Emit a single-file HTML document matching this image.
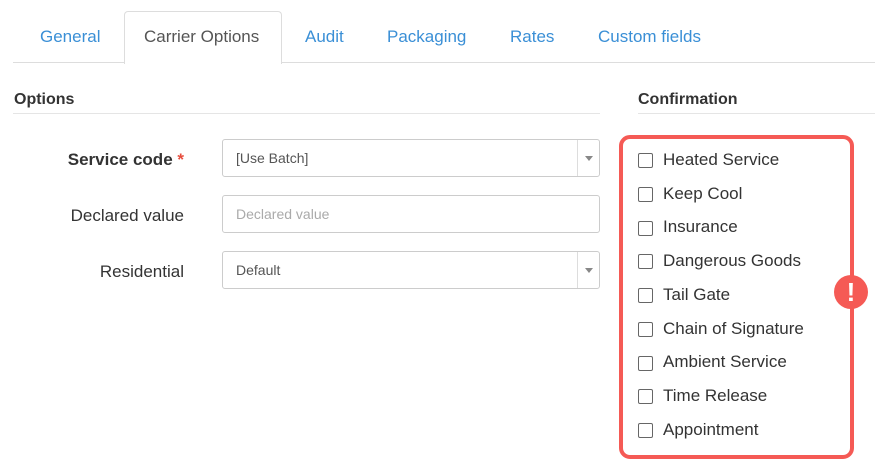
<!DOCTYPE html>
<html><head><style>
body{margin:0;width:875px;height:475px;background:#fff;font-family:"Liberation Sans",sans-serif;position:relative;overflow:hidden;color:#333}
.a{position:absolute}
.tab{position:absolute;top:27px;font-size:17px;color:#3a8fd6}
.inp{position:absolute;left:222px;width:376px;height:36px;border:1px solid #ccc;border-radius:3px;font-size:14px;color:#555}
.inp span{position:absolute;left:13px;top:10px}
.arr{position:absolute;right:21px;top:0;bottom:0;border-left:1px solid #ddd}
.arr:after{content:"";position:absolute;left:7px;top:16px;border:4px solid transparent;border-top:5px solid #888;}
.lbl{position:absolute;font-size:17px;right:691px;text-align:right;white-space:nowrap}
.cb{position:absolute;left:638px;width:13px;height:13px;border:1px solid #666;border-radius:2px}
.ct{position:absolute;left:663px;font-size:17px;color:#333}
</style></head><body>
<div class="a" style="left:13px;top:62px;width:862px;height:1px;background:#ddd"></div>
<div class="a" style="left:124px;top:11px;width:156px;height:52px;border:1px solid #ddd;border-bottom:none;border-radius:4px 4px 0 0;background:#fff"></div>
<div class="tab" style="left:40px">General</div>
<div class="tab" style="left:144px;color:#555">Carrier Options</div>
<div class="tab" style="left:305px">Audit</div>
<div class="tab" style="left:387px">Packaging</div>
<div class="tab" style="left:510px">Rates</div>
<div class="tab" style="left:598px">Custom fields</div>

<div class="a" style="left:14px;top:91px;font-size:16px;font-weight:bold">Options</div>
<div class="a" style="left:13px;top:113px;width:587px;height:1px;background:#e5e5e5"></div>
<div class="a" style="left:638px;top:91px;font-size:16px;font-weight:bold">Confirmation</div>
<div class="a" style="left:638px;top:113px;width:237px;height:1px;background:#e5e5e5"></div>

<div class="lbl" style="top:150px;font-weight:bold">Service code<span style="color:#e74c3c"> *</span></div>
<div class="lbl" style="top:206px">Declared value</div>
<div class="lbl" style="top:262px">Residential</div>
<div class="inp" style="top:139px"><span>[Use Batch]</span><div class="arr"></div></div>
<div class="inp" style="top:195px"><span style="color:#aaa">Declared value</span></div>
<div class="inp" style="top:251px"><span>Default</span><div class="arr"></div></div>

<div class="a" style="left:619px;top:135px;width:227px;height:316px;border:4px solid #f55a55;border-radius:11px"></div>
<div class="a" style="left:834px;top:275px;width:34px;height:34px;border-radius:50%;background:#f55a55;color:#fff;font-weight:bold;font-size:26px;text-align:center;line-height:34px">!</div>

<div class="cb" style="top:153px"></div><div class="ct" style="top:150px">Heated Service</div>
<div class="cb" style="top:187px"></div><div class="ct" style="top:184px">Keep Cool</div>
<div class="cb" style="top:221px"></div><div class="ct" style="top:217px">Insurance</div>
<div class="cb" style="top:254px"></div><div class="ct" style="top:251px">Dangerous Goods</div>
<div class="cb" style="top:288px"></div><div class="ct" style="top:285px">Tail Gate</div>
<div class="cb" style="top:322px"></div><div class="ct" style="top:319px">Chain of Signature</div>
<div class="cb" style="top:356px"></div><div class="ct" style="top:352px">Ambient Service</div>
<div class="cb" style="top:389px"></div><div class="ct" style="top:386px">Time Release</div>
<div class="cb" style="top:423px"></div><div class="ct" style="top:420px">Appointment</div>
</body></html>
